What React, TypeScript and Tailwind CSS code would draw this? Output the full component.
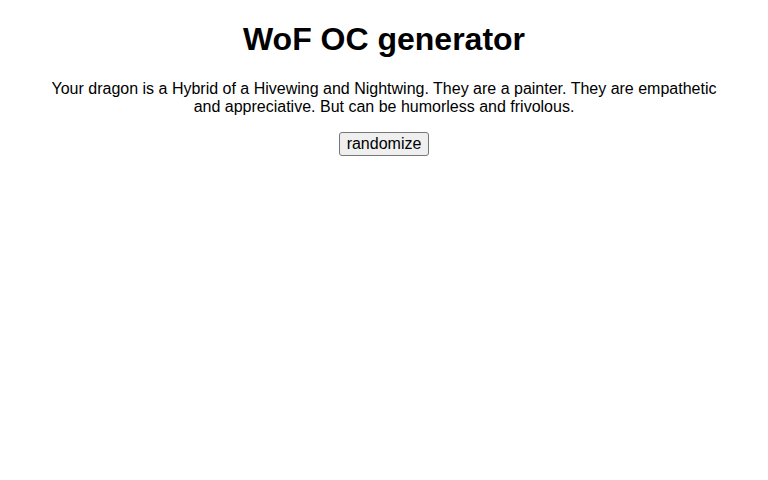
import React, { useState } from "react";

const tribes = ["Hivewing", "Nightwing", "Skywing", "Seawing", "Rainwing", "Sandwing", "Mudwing", "Icewing", "Silkwing", "Leafwing"];

const App = () => {
  const [text] = useState(
    "Your dragon is a Hybrid of a Hivewing and Nightwing. They are a painter. They are empathetic and appreciative. But can be humorless and frivolous."
  );

  return (
    <div className="min-h-screen bg-white text-black text-center font-['Liberation_Sans',Arial,sans-serif]">
      <h1 className="pt-[21px] text-[32px] leading-[37px] font-bold">WoF OC generator</h1>
      <p className="mx-auto mt-[22px] max-w-[680px] text-base leading-[18px]">{text}</p>
      <button
        className="mt-[16px] rounded-[3px] border border-[#767676] bg-[#efefef] px-[7px] py-[1px] text-base leading-[20px] text-black"
        data-tribes={tribes.length}
      >
        randomize
      </button>
    </div>
  );
};

export default App;
